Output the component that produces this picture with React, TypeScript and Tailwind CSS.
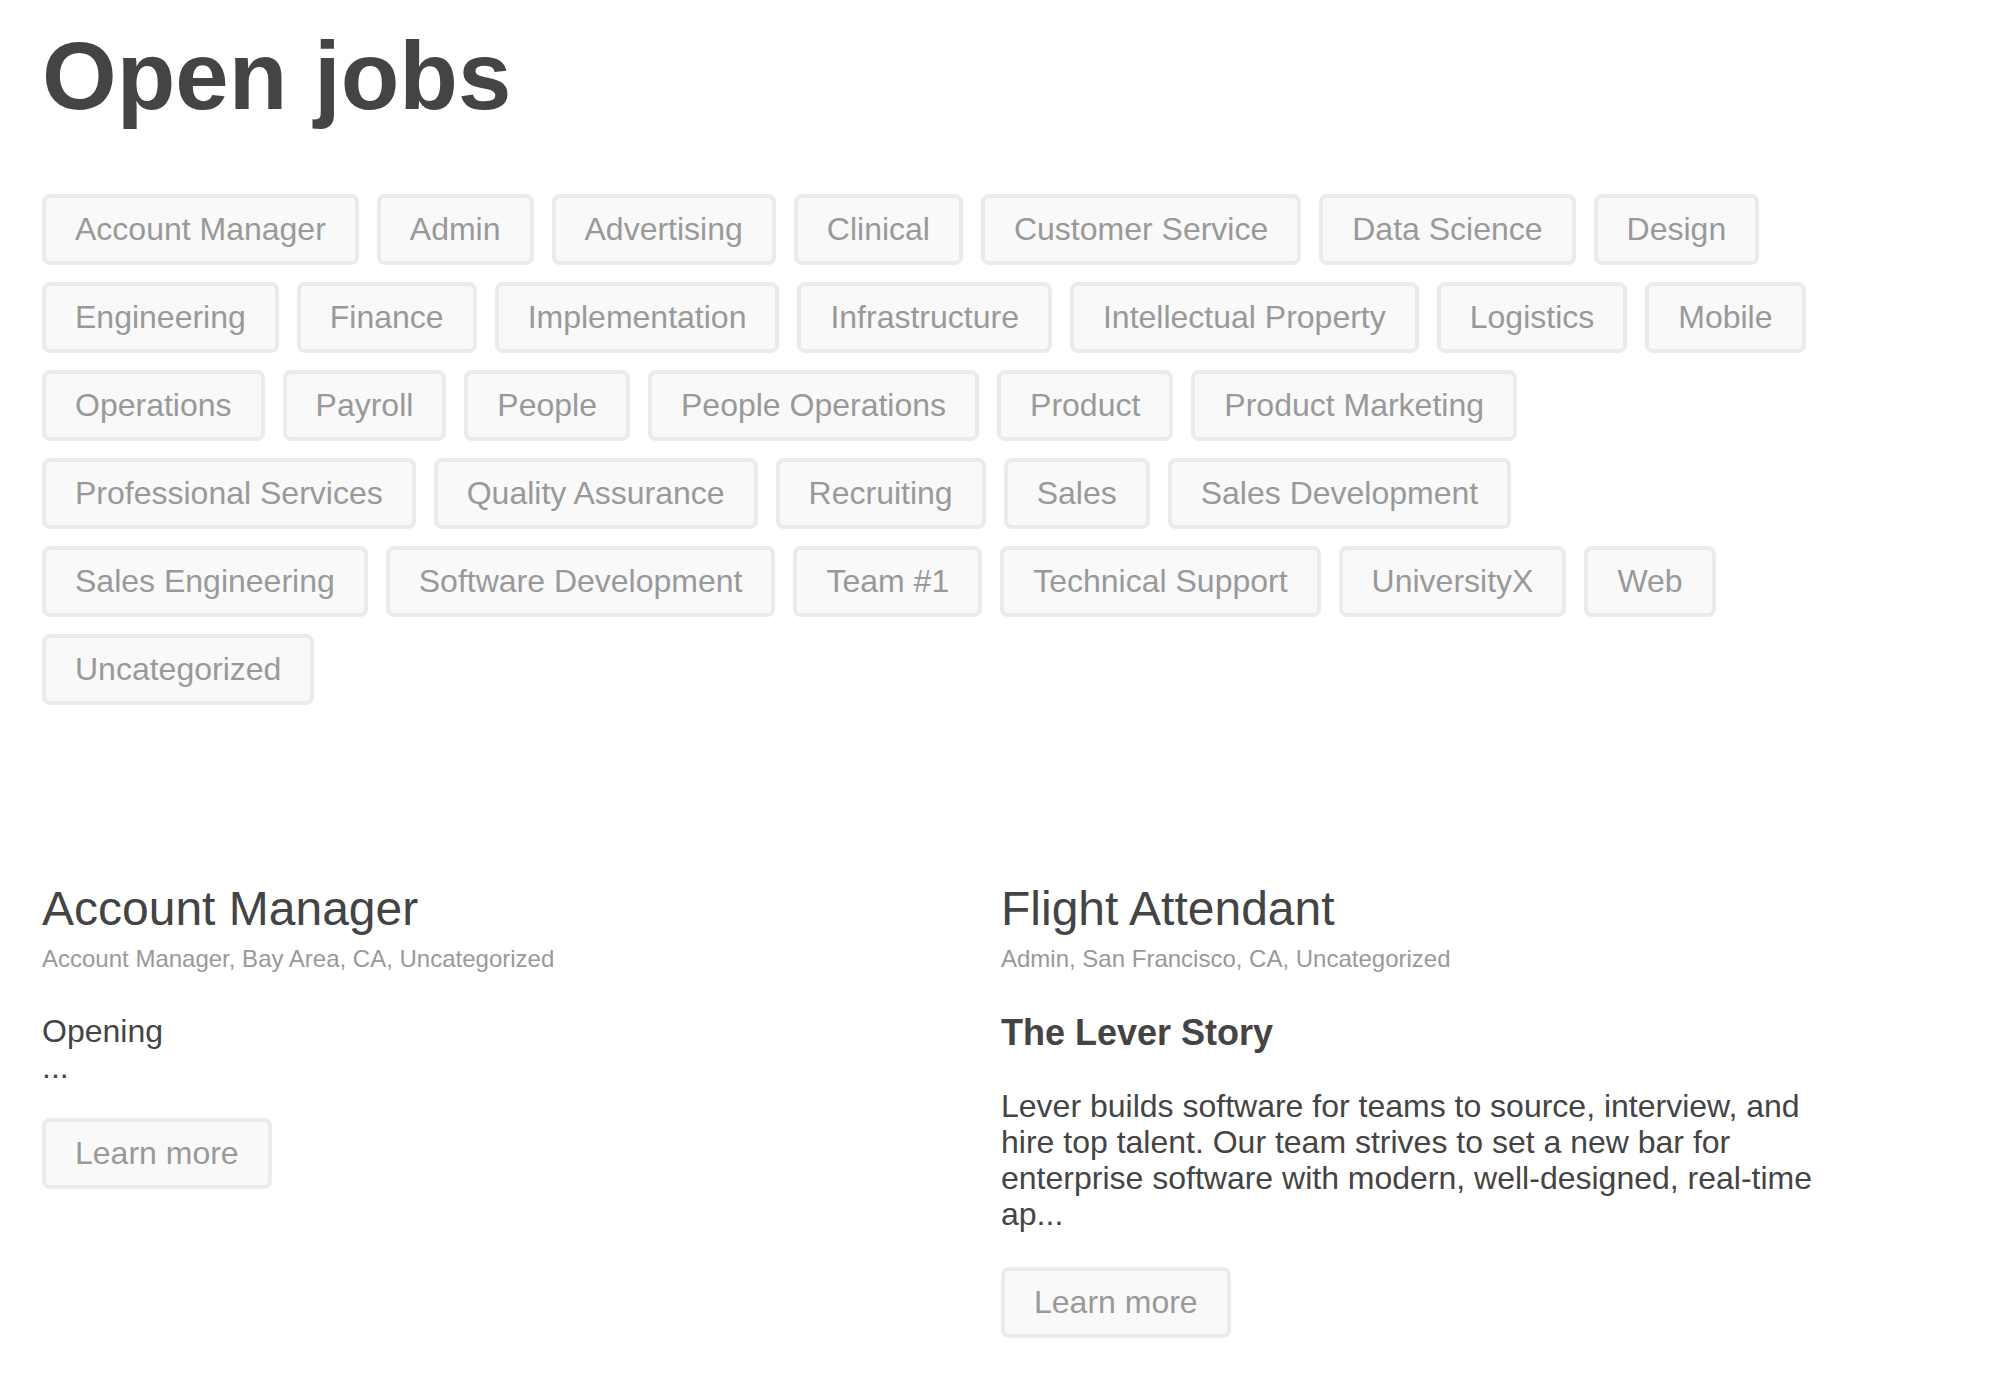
import React from "react";

const departments = [
  "Account Manager",
  "Admin",
  "Advertising",
  "Clinical",
  "Customer Service",
  "Data Science",
  "Design",
  "Engineering",
  "Finance",
  "Implementation",
  "Infrastructure",
  "Intellectual Property",
  "Logistics",
  "Mobile",
  "Operations",
  "Payroll",
  "People",
  "People Operations",
  "Product",
  "Product Marketing",
  "Professional Services",
  "Quality Assurance",
  "Recruiting",
  "Sales",
  "Sales Development",
  "Sales Engineering",
  "Software Development",
  "Team #1",
  "Technical Support",
  "UniversityX",
  "Web",
  "Uncategorized",
];

function PillButton({ children }: { children: React.ReactNode }) {
  return (
    <a
      href="#"
      className="inline-block whitespace-nowrap rounded-[8px] border-4 border-[#ebebeb] bg-[#f9f9f9] px-[29px] text-[32px] leading-[63px] text-[#999999] no-underline"
    >
      {children}
    </a>
  );
}

export default function App() {
  return (
    <div
      className="min-h-screen bg-white px-[42px] pb-[40px] pt-[23px] text-[#444444]"
      style={{ fontFamily: '"Liberation Sans", Arial, Helvetica, sans-serif' }}
    >
      <h1 className="text-[96px] font-bold leading-[106px] text-[#444444]">Open jobs</h1>

      <div className="mt-[65px] flex w-[1790px] flex-wrap gap-x-[18px] gap-y-[17px]">
        {departments.map((d) => (
          <PillButton key={d}>{d}</PillButton>
        ))}
      </div>

      <div className="mt-[177px] grid grid-cols-[959px_840px]">
        <div className="flex flex-col items-start">
          <h2 className="text-[48px] font-normal leading-[53px] text-[#444444]">Account Manager</h2>
          <div className="mt-[7px] text-[24px] leading-[34px] text-[#999999]">
            Account Manager, Bay Area, CA, Uncategorized
          </div>
          <p className="mt-[37px] text-[32px] leading-[36px] text-[#444444]">
            Opening
            <br />
            ...
          </p>
          <div className="mt-[33px]">
            <PillButton>Learn more</PillButton>
          </div>
        </div>

        <div className="flex flex-col items-start">
          <h2 className="text-[48px] font-normal leading-[53px] text-[#444444]">Flight Attendant</h2>
          <div className="mt-[7px] text-[24px] leading-[34px] text-[#999999]">
            Admin, San Francisco, CA, Uncategorized
          </div>
          <h3 className="mt-[37px] text-[36px] font-bold leading-[40px] text-[#444444]">The Lever Story</h3>
          <p className="mt-[35px] text-[32px] leading-[36px] text-[#444444]">
            Lever builds software for teams to source, interview, and hire top talent. Our team strives
            to set a new bar for enterprise software with modern, well-designed, real-time ap...
          </p>
          <div className="mt-[35px]">
            <PillButton>Learn more</PillButton>
          </div>
        </div>
      </div>
    </div>
  );
}
